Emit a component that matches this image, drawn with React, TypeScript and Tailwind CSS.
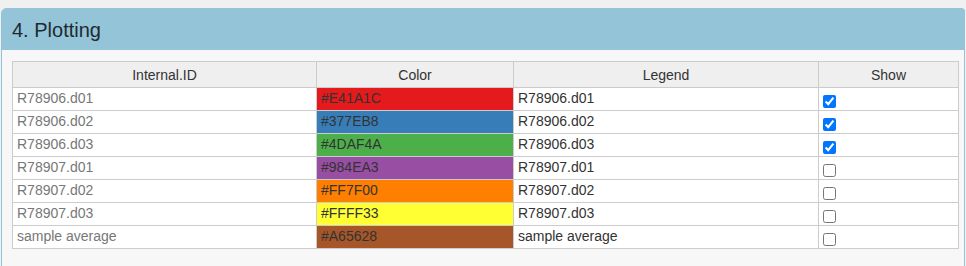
const rows = [
  { id: "R78906.d01", color: "#E41A1C", legend: "R78906.d01", show: true },
  { id: "R78906.d02", color: "#377EB8", legend: "R78906.d02", show: true },
  { id: "R78906.d03", color: "#4DAF4A", legend: "R78906.d03", show: true },
  { id: "R78907.d01", color: "#984EA3", legend: "R78907.d01", show: false },
  { id: "R78907.d02", color: "#FF7F00", legend: "R78907.d02", show: false },
  { id: "R78907.d03", color: "#FFFF33", legend: "R78907.d03", show: false },
  { id: "sample average", color: "#A65628", legend: "sample average", show: false },
];

export default function App() {
  return (
    <div
      className="h-[266px] w-[966px] overflow-hidden bg-[#f0f0f0] pt-2 pl-px text-[14px]"
      style={{ fontFamily: '"Liberation Sans", Arial, sans-serif' }}
    >
      <div className="w-[964px] rounded-tl-[5px] rounded-tr-[3px] border border-[#93c4d8] bg-[#f7f7f7]">
        <div className="flex h-[41px] items-center rounded-tl-[4px] bg-[#93c4d8] px-[10px] text-[20px] text-[#1f2a30]">
          4. Plotting
        </div>
        <div className="px-[10px] pt-[11px] pb-10">
          <table className="w-[946px] table-fixed border-collapse border border-[#cccccc] leading-5">
            <colgroup>
              <col className="w-[304px]" />
              <col className="w-[197px]" />
              <col className="w-[305px]" />
              <col className="w-[140px]" />
            </colgroup>
            <thead>
              <tr className="bg-[#efefef] text-[#333]">
                <th className="h-[26px] border border-[#cccccc] p-0 text-center font-normal">Internal.ID</th>
                <th className="h-[26px] border border-[#cccccc] p-0 text-center font-normal">Color</th>
                <th className="h-[26px] border border-[#cccccc] p-0 text-center font-normal">Legend</th>
                <th className="h-[26px] border border-[#cccccc] p-0 text-center font-normal">Show</th>
              </tr>
            </thead>
            <tbody className="bg-white">
              {rows.map((r) => (
                <tr key={r.id}>
                  <td className="h-[23px] border border-[#cccccc] px-1 py-0 align-top text-[#777]">{r.id}</td>
                  <td
                    className="h-[23px] border border-[#cccccc] px-1 py-0 align-top text-[#333]"
                    style={{ backgroundColor: r.color }}
                  >
                    {r.color}
                  </td>
                  <td className="h-[23px] border border-[#cccccc] px-1 py-0 align-top text-[#333]">{r.legend}</td>
                  <td className="h-[23px] border border-[#cccccc] px-1 py-0 align-top">
                    <input
                      type="checkbox"
                      defaultChecked={r.show}
                      className="m-0 mt-[7px] block h-[13px] w-[13px]"
                    />
                  </td>
                </tr>
              ))}
            </tbody>
          </table>
        </div>
      </div>
    </div>
  );
}
